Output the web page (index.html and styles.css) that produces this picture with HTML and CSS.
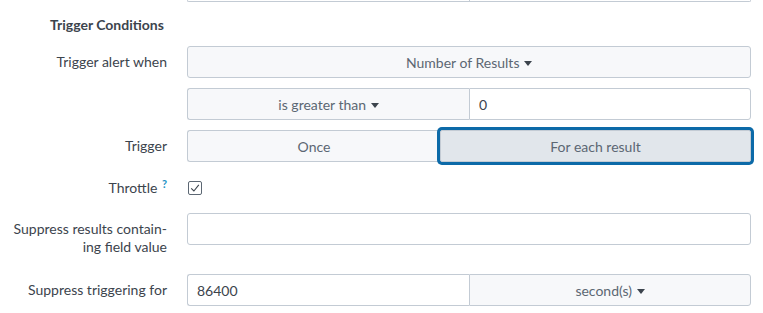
FILE: index.html
```html
<!DOCTYPE html>
<html lang="en">
<head>
    <meta charset="UTF-8">
    <title>Trigger Conditions</title>
    <link rel="stylesheet" href="styles.css">
</head>
<body>
    <div class="panel">
        <div class="top-stub">
            <div class="stub-left"></div>
            <div class="stub-right"></div>
        </div>

        <h3 class="section-title">Trigger Conditions</h3>

        <div class="form-row">
            <label class="form-label">Trigger alert when</label>
            <div class="control">
                <button class="btn btn-full">Number of Results <span class="caret"></span></button>
            </div>
        </div>

        <div class="form-row">
            <div class="form-label"></div>
            <div class="control split">
                <button class="btn btn-left">is greater than <span class="caret"></span></button>
                <input class="text-input input-right" type="text" value="0">
            </div>
        </div>

        <div class="form-row">
            <label class="form-label">Trigger</label>
            <div class="control toggle-group">
                <button class="btn toggle-once">Once</button>
                <button class="btn toggle-each active">For each result</button>
            </div>
        </div>

        <div class="form-row row-check">
            <label class="form-label">Throttle <sup class="help">?</sup></label>
            <div class="control">
                <span class="checkbox">
                    <svg width="10" height="10" viewBox="0 0 10 10"><path d="M1.2 5.3 L3.9 8 L8.8 1.8" fill="none" stroke="#3c444d" stroke-width="1.1"/></svg>
                </span>
            </div>
        </div>

        <div class="form-row row-tall">
            <label class="form-label">Suppress results contain&shy;ing field value</label>
            <div class="control">
                <input class="text-input input-full" type="text" value="">
            </div>
        </div>

        <div class="form-row">
            <label class="form-label">Suppress triggering for</label>
            <div class="control split">
                <input class="text-input input-left" type="text" value="86400">
                <button class="btn btn-right">second(s) <span class="caret"></span></button>
            </div>
        </div>
    </div>
</body>
</html>
```

FILE: styles.css
```css
body {
    margin: 0;
    background: #ffffff;
    font-family: Lato, "Open Sans", sans-serif;
    font-size: 14px;
    color: #3c444d;
}
.panel {
    width: 751px;
}
.top-stub {
    display: flex;
    margin-left: 187px;
    height: 2px;
}
.stub-left,
.stub-right {
    flex: 1;
    border-bottom: 1px solid #c3cbd4;
}
.stub-left {
    border-left: 1px solid #c3cbd4;
    border-bottom-left-radius: 3px;
}
.stub-right {
    border-left: 1px solid #c3cbd4;
    border-right: 1px solid #c3cbd4;
    border-bottom-right-radius: 3px;
}
.section-title {
    margin: 14px 0 12px 50px;
    font-size: 14px;
    line-height: 18px;
    font-weight: bold;
    color: #3c444d;
}
.form-row {
    display: grid;
    grid-template-columns: 167px 564px;
    column-gap: 20px;
    margin-bottom: 10px;
}
.form-label {
    text-align: right;
    padding: 7px 0;
    line-height: 18px;
    color: #3c444d;
}
.row-tall .form-label {
    padding: 7px 0 8px 8px;
    hyphens: manual;
}
.help {
    color: #1e93c6;
    font-size: 11px;
    font-weight: bold;
    vertical-align: 5px;
    line-height: 0;
    margin-left: 1px;
}
.control {
    display: flex;
    height: 32px;
}
.btn {
    font-family: inherit;
    font-size: 14px;
    color: #5c6773;
    background: #f7f8fa;
    border: 1px solid #c3cbd4;
    border-radius: 3px;
    height: 32px;
    padding: 0 10px;
    margin: 0;
    cursor: pointer;
}
.btn-full {
    width: 100%;
}
.caret {
    display: inline-block;
    width: 0;
    height: 0;
    border-left: 4px solid transparent;
    border-right: 4px solid transparent;
    border-top: 5px solid #3c444d;
    vertical-align: 2px;
    margin-left: 1px;
}
.split > * {
    width: 50%;
    box-sizing: border-box;
}
.btn-left {
    border-radius: 3px 0 0 3px;
    border-right: none;
}
.btn-right {
    border-radius: 0 3px 3px 0;
}
.text-input {
    font-family: inherit;
    font-size: 14px;
    color: #3c444d;
    background: #ffffff;
    border: 1px solid #c3cbd4;
    border-radius: 3px;
    height: 32px;
    padding: 0 9px;
    margin: 0;
    box-sizing: border-box;
    outline: none;
}
.input-right {
    border-radius: 0 3px 3px 0;
}
.input-left {
    border-radius: 3px 0 0 3px;
    border-right: none;
}
.input-full {
    width: 100%;
}
.toggle-once {
    width: 253px;
    border-radius: 3px 0 0 3px;
    border-right: none;
}
.toggle-each {
    width: 311px;
    border-radius: 0 3px 3px 0;
}
.toggle-each.active {
    background: #e1e6eb;
    box-shadow: 0 0 0 3px #0c6aa8;
    border-radius: 2px;
}
.row-check {
    margin-bottom: 9px;
}
.row-check .control {
    height: 32px;
    align-items: center;
}
.checkbox {
    display: inline-flex;
    align-items: center;
    justify-content: center;
    width: 14px;
    height: 14px;
    box-sizing: border-box;
    border: 1px solid #5c6773;
    border-radius: 2px;
    margin-left: 1px;
}
```
